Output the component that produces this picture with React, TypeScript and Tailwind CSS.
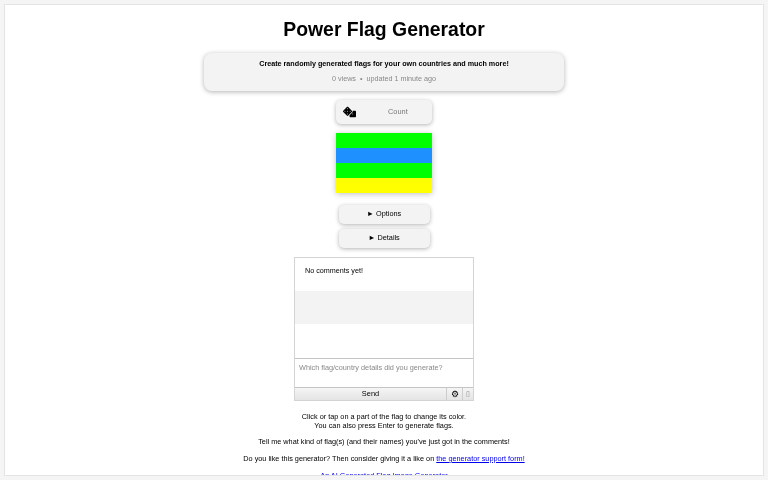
import { FaDice } from 'react-icons/fa';

function PillButton({ label }: { label: string }) {
  return (
    <div className="flex h-[19px] w-[91px] items-center justify-center rounded-[5px] bg-[#f3f3f3] text-[7.3px] text-black shadow-[0_1px_4px_rgba(0,0,0,0.3)]">
      ► {label}
    </div>
  );
}

export default function App() {
  return (
    <div className="h-[480px] overflow-hidden bg-[#f5f5f5] p-[4px] font-['Liberation_Sans',Arial,sans-serif] [filter:blur(0.25px)]">
      <div className="flex h-[472px] flex-col items-center overflow-hidden border border-[#e4e4e4] bg-white">
        <h1 className="mt-[12px] shrink-0 text-[19.4px] leading-[24px] font-bold text-black">Power Flag Generator</h1>

        <div className="mt-[12px] flex h-[38px] w-[360px] shrink-0 flex-col items-center rounded-[8px] bg-[#f3f3f3] pt-[6px] shadow-[0_1px_5px_rgba(0,0,0,0.3)]">
          <p className="text-[7.2px] leading-[10px] font-bold text-black">Create randomly generated flags for your own countries and much more!</p>
          <p className="mt-[5px] text-[7.2px] leading-[10px] text-[#888888]">0 views &nbsp;•&nbsp; updated 1 minute ago</p>
        </div>

        <div className="mt-[9px] flex h-[24px] w-[96px] shrink-0 items-center rounded-[5px] bg-[#f3f3f3] shadow-[0_1px_4px_rgba(0,0,0,0.3)]">
          <FaDice className="ml-[7px] h-[12px] w-[13px] text-black" />
          <span className="ml-[32px] text-[7.4px] text-[#777777]">Count</span>
        </div>

        <div className="mt-[9px] flex w-[96px] shrink-0 flex-col shadow-[0_1px_6px_rgba(0,0,0,0.25)]">
          <div className="h-[15px] bg-[#00ff00]" />
          <div className="h-[15px] bg-[#1e90ff]" />
          <div className="h-[15px] bg-[#00ff00]" />
          <div className="h-[15px] bg-[#ffff00]" />
        </div>

        <div className="mt-[12px] flex shrink-0 flex-col gap-[5px]">
          <PillButton label="Options" />
          <PillButton label="Details" />
        </div>

        <div className="mt-[9px] flex h-[144px] w-[180px] shrink-0 flex-col border border-[#d4d4d4]">
          <div className="flex h-[101px] shrink-0 flex-col border-b border-[#c4c4c4]">
            <div className="h-[33px] px-[10px] pt-[8px] text-[7.2px] leading-[10px] text-black">No comments yet!</div>
            <div className="h-[33px] bg-[#f3f3f3]" />
          </div>
          <div className="h-[28px] shrink-0 px-[4px] pt-[4px] text-[7.3px] leading-[10px] text-[#888888]">Which flag/country details did you generate?</div>
          <div className="flex flex-1 border-t border-[#c4c4c4] bg-gradient-to-b from-[#f5f5f5] to-[#e4e4e4] text-[7.4px] leading-[12px] text-black">
            <div className="flex-1 text-center">Send</div>
            <div className="flex w-[16px] items-center justify-center border-l border-[#cccccc] text-[9px]">⚙</div>
            <div className="flex w-[11px] items-center justify-center border-l border-[#cccccc] text-[#888888]">▯</div>
          </div>
        </div>

        <div className="mt-[11px] shrink-0 text-center text-[7.3px] leading-[9px] text-black">
          <p>Click or tap on a part of the flag to change its color.</p>
          <p>You can also press Enter to generate flags.</p>
          <p className="mt-[7px]">Tell me what kind of flag(s) (and their names) you've just got in the comments!</p>
          <p className="mt-[8px]">Do you like this generator? Then consider giving it a like on <a href="#" className="text-[#0000ee] underline">the generator support form!</a></p>
          <p className="mt-[8px]"><a href="#" className="text-[#0000ee] underline">An AI Generated Flag Image Generator</a></p>
        </div>
      </div>
    </div>
  );
}
